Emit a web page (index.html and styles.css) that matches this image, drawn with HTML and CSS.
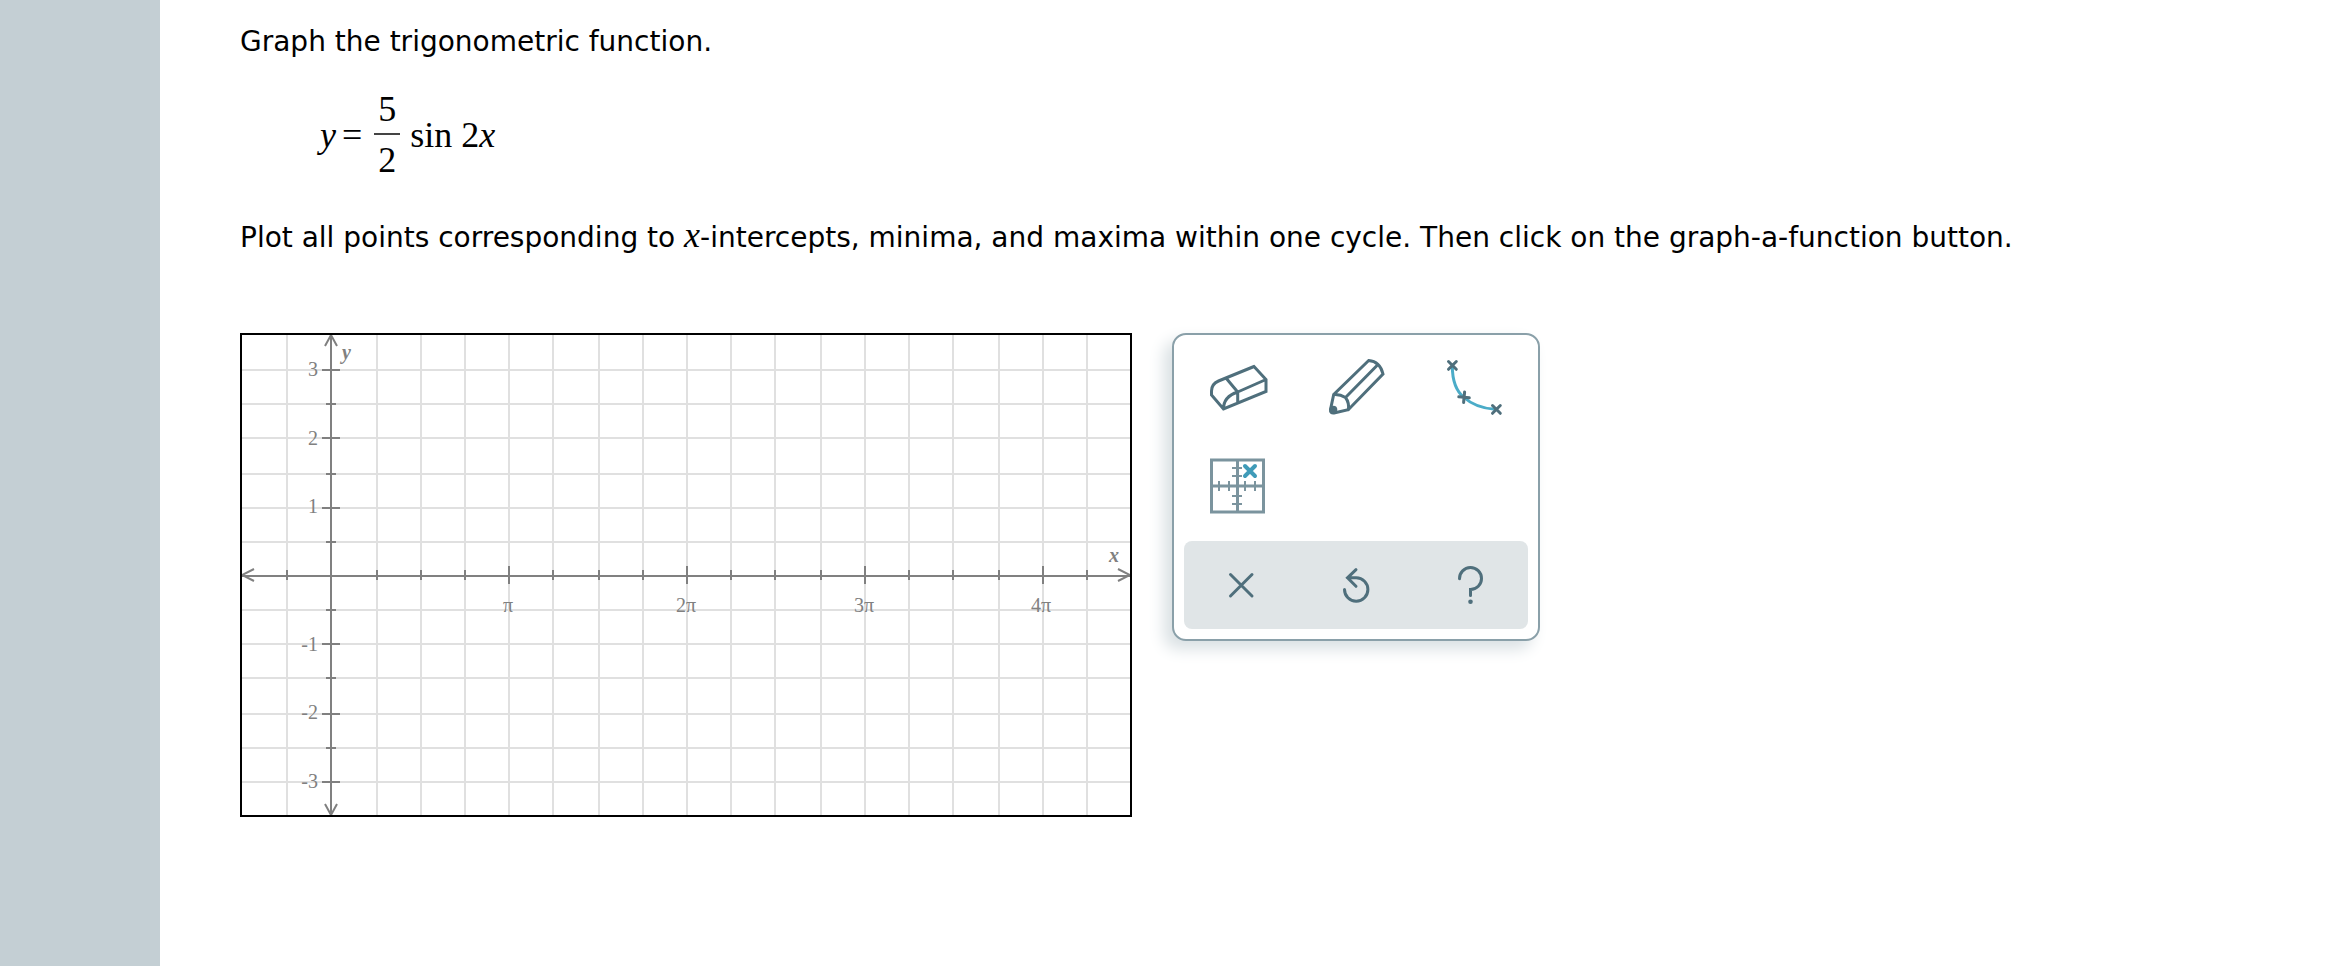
FILE: index.html
```html
<!DOCTYPE html>
<html lang="en">
<head>
  <meta charset="UTF-8">
  <meta name="viewport" content="width=device-width, initial-scale=1.0">
  <title>Graph the trigonometric function</title>
  <link rel="stylesheet" href="styles.css">
</head>
<body>
  <aside class="side"></aside>
  <main class="question">
    <p class="text">Graph the trigonometric function.</p>

    <div class="formula">
      <i>y</i><span class="equals">=</span>
      <span class="fraction"><span class="top">5</span><span>2</span></span>
      <span>sin 2<i>x</i></span>
    </div>

    <p class="text">Plot all points corresponding to <i class="var">x</i>-intercepts, minima, and maxima within one cycle. Then click on the graph-a-function button.</p>

    <div class="workspace">
      <svg class="graph" viewBox="0 0 892 484" role="img" aria-label="Coordinate grid">
        <!-- grid -->
        <path class="grid" d="M47 1V483M137 1V483M181 1V483M225 1V483M269 1V483M313 1V483M359 1V483M403 1V483M447 1V483M491 1V483M535 1V483M581 1V483M625 1V483M669 1V483M713 1V483M759 1V483M803 1V483M847 1V483"/>
        <path class="grid" d="M1 37H891M1 71H891M1 105H891M1 141H891M1 175H891M1 209H891M1 277H891M1 311H891M1 345H891M1 381H891M1 415H891M1 449H891"/>
        <!-- axes and arrows -->
        <path class="axis" d="M91 2V482M2 243H890"/>
        <path class="axis" d="M85 13L91 2L97 13M85 471L91 482L97 471M14 236L2 242L14 248M878 236L890 242L878 248"/>
        <!-- ticks -->
        <path class="axis" d="M82 37H100M86 71H96M82 105H100M86 141H96M82 175H100M86 209H96M86 277H96M82 311H100M86 345H96M82 381H100M86 415H96M82 449H100"/>
        <path class="axis" d="M47 237V247M137 237V247M181 237V247M225 237V247M269 233V251M313 237V247M359 237V247M403 237V247M447 233V251M491 237V247M535 237V247M581 237V247M625 233V251M669 237V247M713 237V247M759 237V247M803 233V251M847 237V247"/>
        <g class="labels" text-anchor="end">
          <text x="78" y="43">3</text>
          <text x="78" y="112">2</text>
          <text x="78" y="180">1</text>
          <text x="78" y="318">-1</text>
          <text x="78" y="386">-2</text>
          <text x="78" y="455">-3</text>
        </g>
        <g class="labels" text-anchor="middle">
          <text x="268" y="279">π</text>
          <text x="446" y="279">2π</text>
          <text x="624" y="279">3π</text>
          <text x="801" y="279">4π</text>
        </g>
        <g class="labels axis-name">
          <text x="102" y="26">y</text>
          <text x="869" y="229">x</text>
        </g>
        <rect class="frame" x="1" y="1" width="890" height="482"/>
      </svg>

      <div class="toolbox">
        <div class="tools">
          <button type="button" aria-label="Eraser">
            <svg viewBox="0 0 60 60">
              <path d="M46 9.5L10.500 24Q3.500 27 3.500 34V38L15.500 52L58 34.500V22.500ZM18 21L29.700 35V45.500M29.700 35L58 22.500M29.700 35Q15.500 39.500 15.500 52"/>
            </svg>
          </button>
          <button type="button" aria-label="Pencil">
            <svg viewBox="0 0 60 60">
              <path d="M42.700 3.500L7.700 37.500L4.500 52.500Q4.200 56.500 8 56L22.300 52.700L57 17Q54 4.500 42.700 3.500ZM7.700 37.500Q14 37 19.500 40.500Q23.500 46 22.300 52.700M19.500 40.500L51.500 8"/>
              <circle class="dot" cx="7.300" cy="52.700" r="4"/>
            </svg>
          </button>
          <button type="button" aria-label="Graph a function">
            <svg viewBox="0 0 60 60">
              <path class="blue" d="M8.300 9C8.300 23 12 34 20 40.500C29 48.500 39 51.500 51 52.300"/>
              <path d="M4.500 4.500L12.300 12.300M12.300 4.500L4.500 12.300M20.600 35L19.600 45.500M14.800 39.800L25.300 40.800M48.500 48.500L56.300 56.300M56.300 48.500L48.500 56.300"/>
            </svg>
          </button>
          <button type="button" aria-label="Plot a point">
            <svg viewBox="0 0 60 60">
              <path class="plot" d="M3.500 5H55.500V57H3.500ZM29.500 5V57M3.500 31H55.500"/>
              <path class="plot-ticks" d="M11 26V36M21 26V36M37 26V36M47 26V36M24 13H34M24 21H34M24 41H34M24 49H34"/>
              <path class="cross" d="M37 11L47 21M47 11L37 21"/>
            </svg>
          </button>
        </div>
        <div class="actions">
          <button type="button" aria-label="Clear">
            <svg viewBox="0 0 60 60"><path d="M19.500 19.500L41 41M41 19.500L19.500 41"/></svg>
          </button>
          <button type="button" aria-label="Reset">
            <svg viewBox="0 0 60 60"><path d="M18.500 34.500A11.700 11.700 0 1 0 30.200 22.800H21.500M30 14.700L21.500 22.800L30 31.300"/></svg>
          </button>
          <button type="button" aria-label="Help">
            <svg viewBox="0 0 60 60">
              <path d="M18.500 23.700A11 11 0 1 1 29.500 34.500V40.500"/>
              <circle class="dot" cx="29.500" cy="46.700" r="2.300"/>
            </svg>
          </button>
        </div>
      </div>
    </div>
  </main>
</body>
</html>
```
FILE: styles.css
```css
body {
  margin: 0;
  min-height: 100vh;
  display: flex;
  background: #fff;
  color: #000;
  font-family: Verdana, "DejaVu Sans", sans-serif;
}

.side {
  width: 160px;
  flex-shrink: 0;
  background: #c4cfd4;
}

.question {
  flex: 1;
  padding: 25px 80px 40px;
}

.text {
  margin: 0;
  font-size: 28px;
  line-height: 34px;
}

.var {
  font-family: "Liberation Serif", serif;
  font-size: 36px;
  line-height: 1px;
}

.formula {
  display: flex;
  align-items: center;
  margin: 26px 0 36px 80px;
  font-family: "Liberation Serif", serif;
  font-size: 36px;
  line-height: 42px;
}

.equals {
  margin-left: 6px;
}

.fraction {
  display: flex;
  flex-direction: column;
  width: 26px;
  margin: 0 10px 0 12px;
  text-align: center;
  line-height: 50px;
}

.fraction .top {
  line-height: 48px;
  border-bottom: 2px solid #444;
}

/* graph and tools */
.workspace {
  display: flex;
  flex-wrap: wrap;
  align-items: flex-start;
  gap: 40px;
  margin-top: 78px;
}

.graph {
  width: 892px;
  max-width: 100%;
}

.graph path,
.graph rect {
  fill: none;
  stroke-width: 2;
}

.graph .grid {
  stroke: #e0e0e0;
}

.graph .axis {
  stroke: #808080;
}

.graph .frame {
  stroke: #000;
}

.labels {
  fill: #808080;
  font-family: "Liberation Serif", serif;
  font-size: 20px;
}

.axis-name {
  font-style: italic;
  font-weight: bold;
}

.toolbox {
  border: 2px solid #8aa0a9;
  border-radius: 14px;
  background: #fff;
  box-shadow: -8px 8px 16px #d9e0e3;
}

.tools {
  display: grid;
  grid-template-columns: repeat(3, 118px);
  grid-auto-rows: 98px;
  padding: 3px 5px 7px;
}

.actions {
  display: grid;
  grid-template-columns: repeat(3, 1fr);
  height: 88px;
  margin: 0 10px 10px;
  border-radius: 8px;
  background: #e0e5e7;
}

.toolbox button {
  display: flex;
  align-items: center;
  justify-content: center;
  padding: 0;
  border: none;
  background: none;
  cursor: pointer;
}

.toolbox svg {
  width: 60px;
  height: 60px;
  fill: none;
  stroke: #4f6f7c;
  stroke-width: 3;
  stroke-linecap: round;
}

.toolbox .dot {
  fill: #4f6f7c;
  stroke: none;
}

.toolbox .blue {
  stroke: #4bacc8;
}

.toolbox .plot {
  stroke: #7b949e;
  stroke-linecap: square;
}

.toolbox .plot-ticks {
  stroke: #7b949e;
  stroke-width: 2;
  stroke-linecap: butt;
}

.toolbox .cross {
  stroke: #3f9bb8;
  stroke-width: 4;
}
```
